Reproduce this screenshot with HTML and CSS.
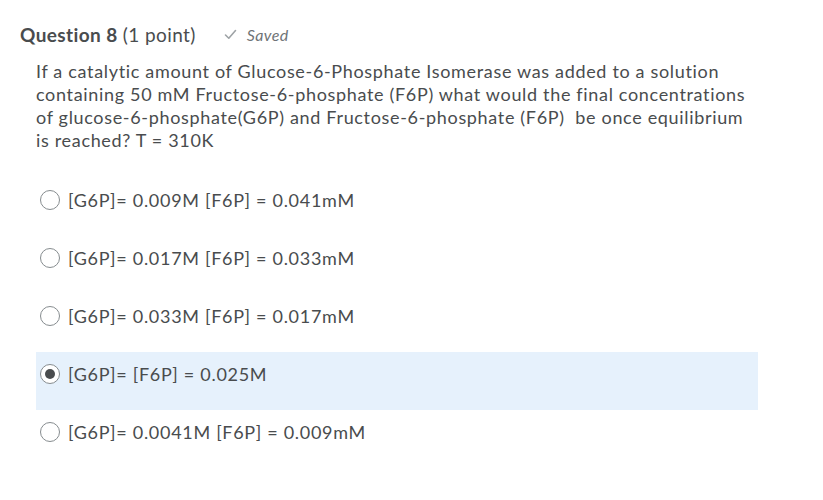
FILE: index.html
```html
<!DOCTYPE html>
<html>
<head>
<meta charset="utf-8">
<link rel="stylesheet" href="styles.css">
</head>
<body>
<div class="question">
  <div class="q-header">
    <span class="q-title"><strong>Question 8</strong> (1 point)</span>
    <span class="saved">
      <svg class="check" width="13" height="11" viewBox="0 0 13 11"><path d="M1.5 6 L4.8 9.2 L11.5 1.5" fill="none" stroke="#9ea3a6" stroke-width="1.6" stroke-linecap="round" stroke-linejoin="round"/></svg>
      <em>Saved</em>
    </span>
  </div>
  <p class="q-text">If a catalytic amount of Glucose-6-Phosphate Isomerase was added to a solution containing 50 mM Fructose-6-phosphate (F6P) what would the final concentrations of glucose-6-phosphate(G6P) and Fructose-6-phosphate (F6P)&nbsp; be once equilibrium<br>is reached? T = 310K</p>
  <div class="options">
    <label class="option"><span class="radio"></span><span class="opt-text">[G6P]= 0.009M [F6P] = 0.041mM</span></label>
    <label class="option"><span class="radio"></span><span class="opt-text">[G6P]= 0.017M [F6P] = 0.033mM</span></label>
    <label class="option"><span class="radio"></span><span class="opt-text">[G6P]= 0.033M [F6P] = 0.017mM</span></label>
    <label class="option selected"><span class="radio checked"></span><span class="opt-text">[G6P]= [F6P] = 0.025M</span></label>
    <label class="option"><span class="radio"></span><span class="opt-text">[G6P]= 0.0041M [F6P] = 0.009mM</span></label>
  </div>
</div>
</body>
</html>
```
FILE: styles.css
```css
html, body {
  margin: 0;
  padding: 0;
  background: #ffffff;
}
body {
  font-family: Lato, "Open Sans", sans-serif;
  color: #494c4e;
  font-variant-ligatures: none;
}
.question {
  padding: 22px 0 0 20px;
  width: 738px;
}
.q-header {
  display: flex;
  align-items: center;
  gap: 28px;
  height: 24px;
}
.q-title {
  font-size: 19px;
  letter-spacing: 0.4px;
  color: #494c4e;
}
.q-title strong {
  font-weight: 700;
}
.saved {
  display: flex;
  align-items: center;
  gap: 10px;
  font-size: 16px;
  letter-spacing: 0.4px;
  color: #6e7376;
}
.check {
  display: block;
}
.q-text {
  margin: 14px 0 0 16px;
  font-size: 18px;
  line-height: 23px;
  letter-spacing: 0.67px;
  color: #494c4e;
}
.options {
  margin: 26px 0 0 16px;
  display: flex;
  flex-direction: column;
}
.option {
  box-sizing: border-box;
  display: flex;
  align-items: center;
  height: 58px;
  padding: 0 0 14px 4px;
  gap: 8px;
  font-size: 18px;
  letter-spacing: 0.7px;
}
.option.selected {
  background: #e6f1fc;
}
.radio {
  box-sizing: border-box;
  width: 20px;
  height: 20px;
  border-radius: 50%;
  border: 1px solid #868c8f;
  background: #ffffff;
  display: flex;
  align-items: center;
  justify-content: center;
  flex: none;
}
.radio.checked::after {
  content: "";
  width: 10px;
  height: 10px;
  border-radius: 50%;
  background: #494c4e;
}
```
